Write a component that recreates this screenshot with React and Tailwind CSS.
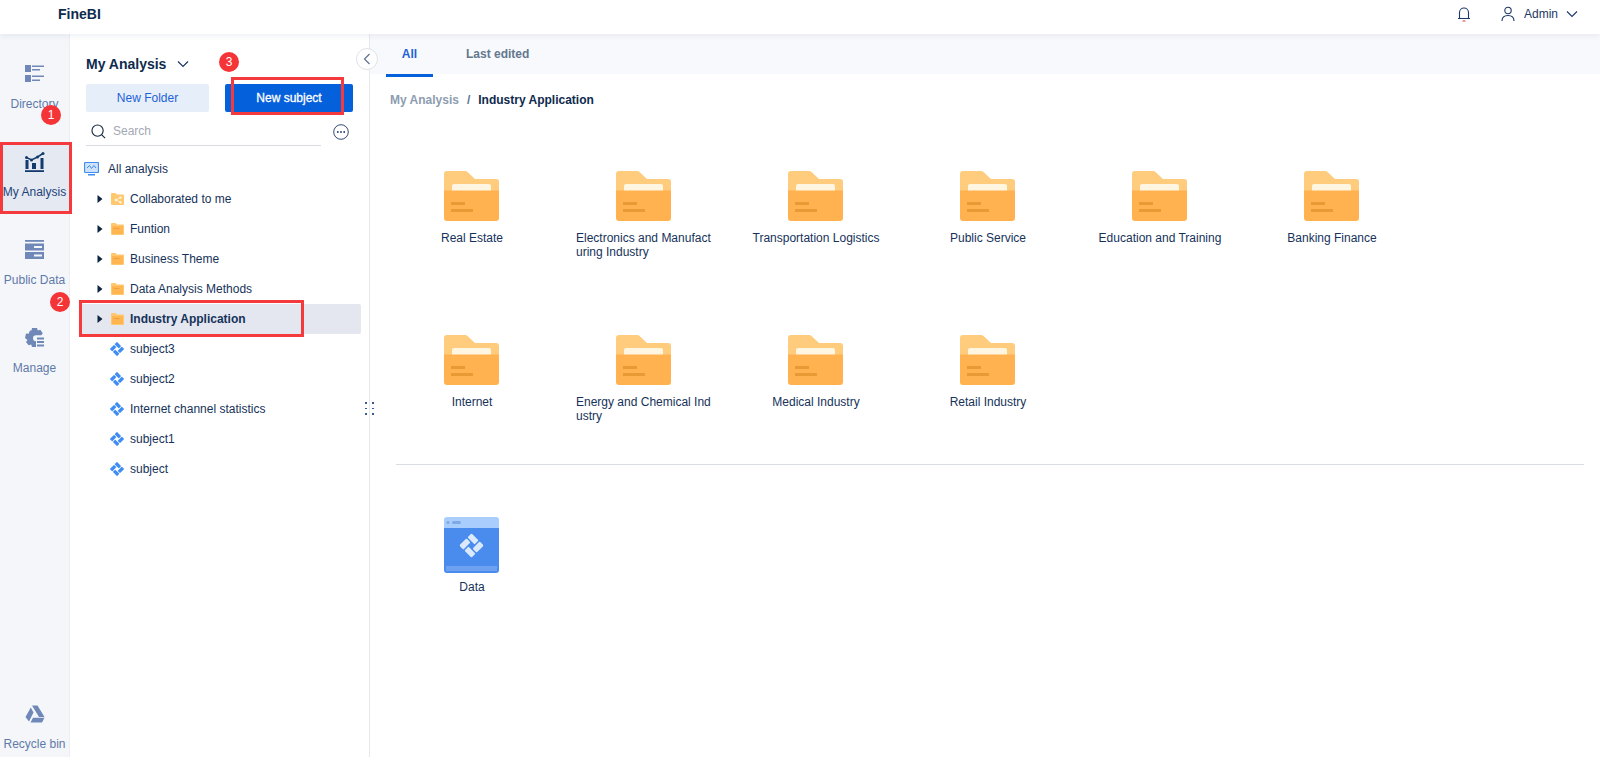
import React from "react";

const Pin = ({ className, fill = "currentColor" }) => (
  <svg viewBox="0 0 24 24" className={className} fill={fill}>
    <g transform="translate(12 12) rotate(45) scale(0.96)">
      <rect x="-9" y="-9" width="10.500" height="6" rx="1" />
      <rect x="3" y="-9" width="6" height="10.500" rx="1" />
      <rect x="-1.500" y="3" width="10.500" height="6" rx="1" />
      <rect x="-9" y="-1.500" width="6" height="10.500" rx="1" />
    </g>
  </svg>
);

const BigFolder = () => (
  <svg viewBox="0 0 55 50" className="w-[55px] h-[50px] block mr-[1px]">
    <path d="M0 3a3 3 0 0 1 3-3h18c1 0 1.800.4 2.500 1L31 8h21a3 3 0 0 1 3 3v12H0z" fill="#ffcb7c" />
    <rect x="8" y="13" width="39" height="10" rx="2" fill="#fff6e2" />
    <path d="M0 19.500h55V47a3 3 0 0 1-3 3H3a3 3 0 0 1-3-3z" fill="#ffb24f" />
    <rect x="7" y="31" width="14" height="3" fill="#e89a35" />
    <rect x="7" y="38" width="22" height="3" fill="#e89a35" />
  </svg>
);

const DataIcon = () => (
  <svg viewBox="0 0 55 56" className="w-[55px] h-[56px] block mr-[1px]">
    <path d="M0 11V3a3 3 0 0 1 3-3h49a3 3 0 0 1 3 3v8z" fill="#a9cdfd" />
    <path d="M0 11h55v42a3 3 0 0 1-3 3H3a3 3 0 0 1-3-3z" fill="#4a8cee" />
    <circle cx="4" cy="5.500" r="1.500" fill="#7fa9e6" />
    <rect x="8" y="4" width="9" height="3" rx="1.500" fill="#7fa9e6" />
    <rect x="2" y="49" width="51" height="5" fill="#6ea2f0" />
    <g transform="translate(15.500 16.500)">
      <Pin className="w-[24px] h-[24px]" fill="#dbe9fd" />
    </g>
  </svg>
);

const TreeFolder = ({ share }) => (
  <svg viewBox="0 0 13 13" className="w-[13px] h-[13px] shrink-0 -mt-[1px]">
    <path d="M0 2a1 1 0 0 1 1-1h3.500l1.500 1.500h6a1 1 0 0 1 1 1V12a1 1 0 0 1-1 1H1a1 1 0 0 1-1-1z" fill="#ffc76e" />
    {share ? (
      <g fill="#fff4dc">
        <circle cx="5" cy="8" r="1.300" />
        <circle cx="9.500" cy="5.500" r="1.200" />
        <circle cx="9.500" cy="10.500" r="1.200" />
        <path d="M5 7.600l4.500-2.500.3.600-4.500 2.500zM5 8.400l4.500 2 .3-.6-4.500-2z" />
      </g>
    ) : (
      <>
        <rect x="1" y="4" width="11" height="8" fill="#ffb650" />
        <rect x="2.500" y="6" width="6" height="1" fill="#f0a040" />
      </>
    )}
  </svg>
);

const Caret = () => (
  <svg viewBox="0 0 6 8" className="w-[6px] h-[8px] shrink-0">
    <path d="M0.500 0L5.500 4L0.500 8z" fill="#0f2440" />
  </svg>
);

const railIcons = {
  directory: (
    <svg viewBox="0 0 20 18" className="w-[20px] h-[18px]" fill="#6f88b8">
      <rect x="0" y="0" width="6" height="7" />
      <rect x="0" y="10" width="6" height="7" />
      <rect x="7" y="0.500" width="12" height="1.500" />
      <rect x="7" y="4" width="8" height="1.500" />
      <rect x="7" y="10.500" width="12" height="1.500" />
      <rect x="7" y="14.500" width="8" height="1.500" />
    </svg>
  ),
  analysis: (
    <svg viewBox="0 0 20 20" className="w-[20px] h-[20px]" fill="#143b6e">
      <path d="M1.500 5.500L6.500 8L12.500 5L18 1.500" fill="none" stroke="#143b6e" strokeWidth="1.500" />
      <circle cx="1.500" cy="5.500" r="1.500" />
      <circle cx="6.500" cy="8" r="1.500" />
      <circle cx="12.500" cy="5" r="1.500" />
      <circle cx="18" cy="1.500" r="1.500" />
      <rect x="0.500" y="8" width="3" height="9" />
      <rect x="7" y="11" width="4" height="6" />
      <rect x="15.500" y="6" width="3" height="11" />
      <rect x="0" y="18.200" width="19" height="1.800" />
    </svg>
  ),
  data: (
    <svg viewBox="0 0 20 20" className="w-[20px] h-[20px]">
      <rect x="0" y="0" width="19" height="1.800" fill="#6f88b8" />
      <rect x="0" y="3.500" width="19" height="7" fill="#6f88b8" />
      <rect x="0" y="12" width="19" height="7" fill="#6f88b8" />
      <rect x="9" y="6" width="8" height="2" fill="#f4f6fa" />
      <rect x="9" y="14.500" width="8" height="2" fill="#f4f6fa" />
    </svg>
  ),
  manage: (
    <svg viewBox="0 0 20 20" className="w-[20px] h-[20px]">
      <path d="M7 0h5l.800 2.500 2.500-.800 2.500 3.500-1.500 2H11a3 3 0 1 0 0 6v5.800H7l-.800-2.500-2.600.800L1 14l1.500-2L0 10l1-4.500 2.600.200L5 2.500 6.500 2.500z" fill="#6f88b8" />
      <rect x="12" y="9.500" width="7" height="2" fill="#6f88b8" />
      <rect x="12" y="13" width="7" height="2" fill="#6f88b8" />
      <rect x="12" y="16.500" width="7" height="2" fill="#6f88b8" />
    </svg>
  ),
  recycle: (
    <svg viewBox="0 0 20 18" className="w-[20px] h-[18px]" fill="#6f88b8">
      <path d="M7 0.500h5.500l7 11.500h-5.500z" />
      <path d="M5.800 2.500L8.500 7.500 4 16.500 0.500 12z" />
      <path d="M5.500 17.500L8 12.800h11.500l-2.500 4.700z" />
    </svg>
  ),
};

const RailItem = ({ icon, label, active, last }) => (
  <div
    className={`w-full flex flex-col items-center text-[12px] leading-[14px] ${last ? "h-[63px] mt-auto" : "h-[72px]"} ${
      active ? "bg-[#e5e9f2] text-[#1d4378]" : "text-[#5f7aa8]"
    }`}
  >
    <div className="h-[20px] mt-[10px] flex items-center justify-center">{railIcons[icon]}</div>
    <span className="mt-[13px] whitespace-nowrap">{label}</span>
  </div>
);

const Row = ({ children, icon, caret, selected }) => (
  <div
    className={`h-[30px] flex items-center rounded-[2px] ${caret ? "pl-[17px]" : "pl-[30px]"} ${
      selected ? "bg-[#e4e7ef] font-bold" : ""
    } text-[12px] text-[#16325a]`}
  >
    {caret && <Caret />}
    {caret && <span className="w-[8px]" />}
    {icon}
    <span className="ml-[6px] whitespace-nowrap">{children}</span>
  </div>
);

const Subject = () => <Pin className="w-[14px] h-[14px] text-[#3f8cf2] shrink-0" />;

const folders = [
  "Real Estate",
  "Electronics and Manufacturing Industry",
  "Transportation Logistics",
  "Public Service",
  "Education and Training",
  "Banking Finance",
  "Internet",
  "Energy and Chemical Industry",
  "Medical Industry",
  "Retail Industry",
];

const Badge = ({ n, className }) => (
  <div
    className={`absolute w-[20px] h-[20px] rounded-full bg-[#f53437] text-white text-[12px] leading-[20px] text-center ${className}`}
  >
    {n}
  </div>
);

const RedBox = ({ className }) => (
  <div className={`absolute border-[3px] border-[#f53a3d] pointer-events-none ${className}`} />
);

export default function App() {
  return (
    <div
      className="relative w-full h-[757px] overflow-hidden bg-white flex flex-col text-[#16325a]"
      style={{ fontFamily: '"Liberation Sans", Arial, sans-serif' }}
    >
      <header className="h-[34px] shrink-0 bg-white flex items-center justify-between pl-[58px] pr-[22px] shadow-[0_2px_6px_rgba(40,60,110,0.08)] relative z-10">
        <span className="text-[14px] font-bold text-[#0e2a4d] -mt-[6px]">FineBI</span>
        <div className="flex items-center -mt-[6px] text-[12px] text-[#1b3763]">
          <svg viewBox="0 0 14 16" className="w-[14px] h-[16px] mr-[30px] -mt-[1px]" fill="none" stroke="#1b3763" strokeWidth="1.100">
            <path d="M1 12.500h12M2.500 12.500V6.500a4.500 4.500 0 0 1 9 0v6" />
            <path d="M5.500 15h3" stroke="#d8455a" />
          </svg>
          <svg viewBox="0 0 14 16" className="w-[14px] h-[16px] mr-[9px]" fill="none" stroke="#1b3763" strokeWidth="1.100">
            <circle cx="7" cy="4.500" r="3.200" />
            <path d="M1 15c0-3.500 2.500-5.500 6-5.500s6 2 6 5.500" />
          </svg>
          <span>Admin</span>
          <svg viewBox="0 0 12 8" className="w-[12px] h-[8px] ml-[8px]" fill="none" stroke="#1b3763" strokeWidth="1.100">
            <path d="M1 1.500L6 6.500L11 1.500" />
          </svg>
        </div>
      </header>

      <div className="flex flex-1 min-h-0">
        <aside className="w-[70px] shrink-0 bg-[#f4f6fa] border-r border-[#eceef3] flex flex-col gap-[16px] pt-[20px]">
          <RailItem icon="directory" label="Directory" />
          <RailItem icon="analysis" label="My Analysis" active />
          <RailItem icon="data" label="Public Data" />
          <RailItem icon="manage" label="Manage" />
          <RailItem icon="recycle" label="Recycle bin" last />
        </aside>

        <section className="w-[300px] shrink-0 border-r border-[#e6e8ee] pl-[10px] pr-[8px] pt-[20px]">
          <div className="h-[20px] flex items-center pl-[6px] gap-[11px]">
            <span className="text-[14px] font-bold text-[#0e2a4d]">My Analysis</span>
            <svg viewBox="0 0 12 8" className="w-[12px] h-[8px]" fill="none" stroke="#1b3763" strokeWidth="1.200">
              <path d="M1 1.500L6 6.500L11 1.500" />
            </svg>
          </div>
          <div className="mt-[10px] pl-[6px] flex gap-[16px]">
            <button className="w-[123px] h-[28px] rounded-[2px] bg-[#e6eef9] text-[12px] text-[#1e62d8]">New Folder</button>
            <button className="w-[128px] h-[28px] rounded-[2px] bg-[#0560dc] text-[12px] text-white [-webkit-text-stroke:0.3px_white]">New subject</button>
          </div>
          <div className="mt-[5px] ml-[6px] flex items-center">
            <div className="w-[235px] h-[29px] border-b border-[#d9dce3] flex items-center pl-[5px]">
              <svg viewBox="0 0 16 16" className="w-[15px] h-[15px]" fill="none" stroke="#16283f" strokeWidth="1.200">
                <circle cx="7" cy="7" r="6" />
                <path d="M11.500 11.500L15 15" />
              </svg>
              <span className="ml-[7px] text-[12px] text-[#a3a9b3]">Search</span>
            </div>
            <svg viewBox="0 0 16 16" className="w-[16px] h-[16px] ml-[12px]" fill="#1b3763">
              <circle cx="8" cy="8" r="7.300" fill="none" stroke="#1b3763" strokeWidth="0.900" />
              <circle cx="4.800" cy="8" r="0.900" />
              <circle cx="8" cy="8" r="0.900" />
              <circle cx="11.200" cy="8" r="0.900" />
            </svg>
          </div>
          <div className="mt-[8px]">
            <div className="h-[30px] flex items-center pl-[5px] text-[12px] text-[#16325a]">
              <svg viewBox="0 0 15 14" className="w-[15px] h-[14px] -ml-[1px]">
                <rect x="0.500" y="0.500" width="14" height="10" rx="1" fill="#cfe2fb" stroke="#3f8cf2" strokeWidth="1.200" />
                <path d="M3 6L5.500 3.500L7.500 6.500L10 3.500L12 6" fill="none" stroke="#3f8cf2" />
                <rect x="4" y="12" width="7" height="1.500" fill="#3f8cf2" />
              </svg>
              <span className="ml-[9px]">All analysis</span>
            </div>
            <Row caret icon={<TreeFolder share />}>Collaborated to me</Row>
            <Row caret icon={<TreeFolder />}>Funtion</Row>
            <Row caret icon={<TreeFolder />}>Business Theme</Row>
            <Row caret icon={<TreeFolder />}>Data Analysis Methods</Row>
            <Row caret selected icon={<TreeFolder />}>Industry Application</Row>
            <Row icon={<Subject />}>subject3</Row>
            <Row icon={<Subject />}>subject2</Row>
            <Row icon={<Subject />}>Internet channel statistics</Row>
            <Row icon={<Subject />}>subject1</Row>
            <Row icon={<Subject />}>subject</Row>
          </div>
        </section>

        <main className="flex-1 min-w-0">
          <div className="h-[40px] bg-[#f8f9fc] flex pl-[16px] gap-[33px] text-[12px] font-bold">
            <div className="w-[47px] h-[43px] border-b-[3px] border-[#0560dc] flex items-center justify-center text-[#1e62d8]">All</div>
            <div className="h-[40px] flex items-center text-[#64778f]">Last edited</div>
          </div>
          <div className="mt-[19px] pl-[20px] h-[14px] flex items-center gap-[8px] text-[12px] font-bold leading-[14px]">
            <span className="text-[#8d9db0]">My Analysis</span>
            <span className="text-[#5f7390]">/</span>
            <span className="text-[#0e2a4d]">Industry Application</span>
          </div>
          <div className="mt-[64px] pl-[16px] grid grid-cols-[repeat(6,172px)] gap-y-[35px]">
            {folders.map((f) => (
              <div key={f} className="h-[129px] flex flex-col items-center">
                <BigFolder />
                <div className="mt-[10px] w-fit max-w-[136px] break-all text-[12px] leading-[14px] text-[#16325a]">{f}</div>
              </div>
            ))}
          </div>
          <div className="ml-[26px] mr-[16px] h-px bg-[#d9dce3]" />
          <div className="mt-[52px] ml-[16px] w-[172px] flex flex-col items-center">
            <DataIcon />
            <div className="mt-[7px] text-[12px] leading-[14px] text-[#16325a]">Data</div>
          </div>
        </main>
      </div>

      <div className="absolute left-[356px] top-[48px] w-[22px] h-[22px] rounded-full bg-white border border-[#dfe2e8] flex items-center justify-center z-20">
        <svg viewBox="0 0 8 12" className="w-[8px] h-[12px]" fill="none" stroke="#5f7390" strokeWidth="1.200">
          <path d="M6.500 1L1.500 6L6.500 11" />
        </svg>
      </div>
      <div className="absolute left-[365px] top-[402px] grid grid-cols-2 gap-x-[5px] gap-y-[4px] z-20">
        {[0, 1, 2, 3, 4, 5].map((i) => (
          <span key={i} className="w-[2px] h-[1.500px] bg-[#3a5a92]" />
        ))}
      </div>

      <RedBox className="left-0 top-[142px] w-[72px] h-[72px]" />
      <RedBox className="left-[79px] top-[300px] w-[225px] h-[37px]" />
      <RedBox className="left-[231px] top-[77px] w-[113px] h-[38px]" />
      <Badge n="1" className="left-[41px] top-[105px]" />
      <Badge n="2" className="left-[50px] top-[292px]" />
      <Badge n="3" className="left-[219px] top-[52px]" />
    </div>
  );
}
